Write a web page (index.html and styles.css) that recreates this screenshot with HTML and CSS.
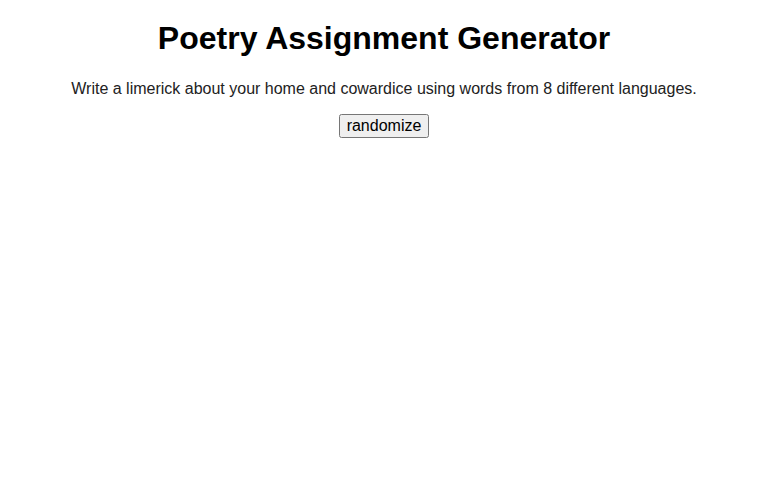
FILE: index.html
```html
<!DOCTYPE html>
<html lang="en">
<head>
    <meta charset="UTF-8">
    <meta name="viewport" content="width=device-width, initial-scale=1.0">
    <title>Poetry Assignment Generator</title>
    <link rel="stylesheet" href="styles.css">
</head>
<body>
    <div class="container">
        <h1 class="title">Poetry Assignment Generator</h1>
        <p class="prompt" id="prompt">Write a limerick about your home and cowardice using words from 8 different languages.</p>
        <button class="randomize" id="randomize">randomize</button>
    </div>
</body>
</html>
```

FILE: styles.css
```css
body{
    margin: 0;
    text-align: center;
    font-family: "Liberation Sans", Arial, sans-serif;
    background-color: #ffffff;
    color: #000000;
}
.container {
    display: flex;
    flex-direction: column;
    align-items: center;
}
.title {
    font-size: 32px;
    font-weight: bold;
    margin: 20px 0 23px;
}
.prompt {
    font-size: 16px;
    color: #222222;
    margin: 0 0 16px;
}
.randomize {
    font-family: "Liberation Sans", Arial, sans-serif;
    font-size: 16px;
    padding: 1px 6px;
}
```
